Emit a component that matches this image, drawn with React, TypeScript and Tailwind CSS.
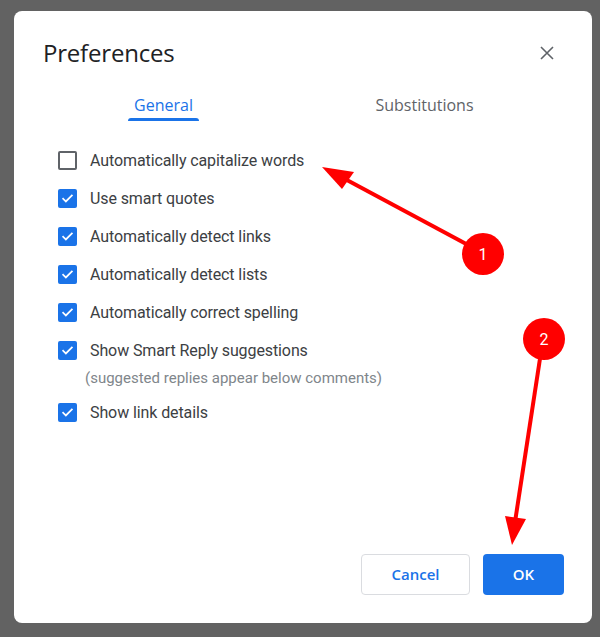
import React from "react";

const options = [
  { label: "Automatically capitalize words", checked: false },
  { label: "Use smart quotes", checked: true },
  { label: "Automatically detect links", checked: true },
  { label: "Automatically detect lists", checked: true },
  { label: "Automatically correct spelling", checked: true },
  { label: "Show Smart Reply suggestions", checked: true, note: "(suggested replies appear below comments)" },
  { label: "Show link details", checked: true },
];

function Checkbox({ checked }: { checked: boolean }) {
  if (!checked) {
    return <div className="w-[19px] h-[19px] rounded-[2px] border-2 border-[#5f6368] shrink-0" />;
  }
  return (
    <div className="w-[19px] h-[19px] rounded-[2px] bg-[#1a73e8] shrink-0 flex items-center justify-center">
      <svg width="13" height="13" viewBox="0 0 24 24" fill="none">
        <path d="M4 12.5l5 5L20 6.5" stroke="white" strokeWidth="3.2" strokeLinecap="square" />
      </svg>
    </div>
  );
}

function Annotations() {
  return (
    <svg className="absolute left-0 top-0 pointer-events-none" width="600" height="637" viewBox="0 0 600 637">
      <line x1="483" y1="253" x2="345" y2="179" stroke="#ff0000" strokeWidth="4" />
      <polygon points="322,167 354,172 342,189" fill="#ff0000" />
      <circle cx="483" cy="254" r="21" fill="#ff0000" />
      <text x="483" y="260" textAnchor="middle" fill="white" fontSize="16" fontFamily="Roboto, sans-serif">1</text>

      <line x1="543" y1="339" x2="515" y2="522" stroke="#ff0000" strokeWidth="4" />
      <polygon points="512,545 505,516 526,519" fill="#ff0000" />
      <circle cx="544" cy="339" r="21" fill="#ff0000" />
      <text x="544" y="345" textAnchor="middle" fill="white" fontSize="16" fontFamily="Roboto, sans-serif">2</text>
    </svg>
  );
}

export default function App() {
  return (
    <div className="relative w-[600px] h-[637px] bg-[#626262] pt-[11px] pl-[14px] font-['Roboto',sans-serif]">
      <div className="w-[578px] h-[612px] bg-white rounded-[8px] flex flex-col">
        <div className="flex items-center justify-between pl-[29px] pr-[38px] pt-[27px]">
          <h1 className="text-[24px] leading-[30px] text-[#202124] font-['Open_Sans',sans-serif] tracking-[-0.2px]">Preferences</h1>
          <svg width="14" height="14" viewBox="0 0 14 14">
            <path d="M1 1l12 12M13 1L1 13" stroke="#5f6368" strokeWidth="1.6" />
          </svg>
        </div>

        <div className="flex ml-[19px] w-[522px] mt-[27px]">
          <div className="flex-1 flex justify-center">
            <div className="flex flex-col items-center">
              <span className="text-[16px] font-medium leading-[20px] text-[#1a73e8] px-[6px] font-['Open_Sans',sans-serif]">General</span>
              <div className="mt-[3px] h-[3px] w-full bg-[#1a73e8] rounded-t-[3px]" />
            </div>
          </div>
          <div className="flex-1 flex justify-center">
            <span className="text-[16px] font-medium leading-[20px] text-[#5f6368] font-['Open_Sans',sans-serif]">Substitutions</span>
          </div>
        </div>

        <div className="flex flex-col pl-[44px] mt-[26px]">
          {options.map((o) => (
            <div key={o.label} className="flex flex-col mb-[11px]">
              <div className="flex items-center gap-[13px] h-[27px]">
                <Checkbox checked={o.checked} />
                <span className="text-[16px] tracking-[-0.1px] text-[#3c4043]">{o.label}</span>
              </div>
              {o.note && (
                <span className="pl-[27px] mt-[4px] text-[15px] leading-[20px] text-[#80868b]">{o.note}</span>
              )}
            </div>
          ))}
        </div>

        <div className="mt-auto flex justify-end gap-[13px] pr-[28px] pb-[28px]">
          <button className="w-[109px] h-[41px] rounded-[4px] border border-[#dadce0] text-[#1a73e8] text-[15px] font-semibold font-['Open_Sans',sans-serif]">
            Cancel
          </button>
          <button className="w-[81px] h-[41px] rounded-[4px] bg-[#1a73e8] text-white text-[15px] font-semibold font-['Open_Sans',sans-serif]">
            OK
          </button>
        </div>
      </div>
      <Annotations />
    </div>
  );
}
